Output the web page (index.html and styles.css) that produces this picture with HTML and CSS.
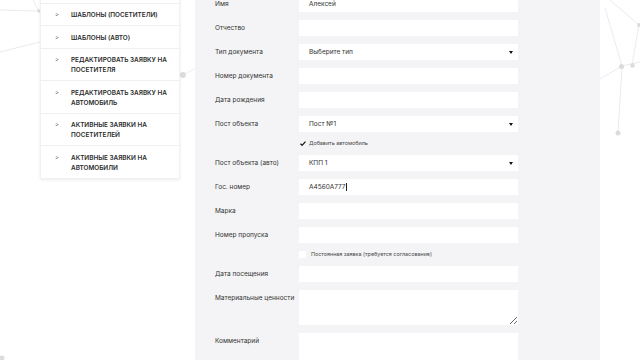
FILE: index.html
```html
<!DOCTYPE html>
<html lang="ru">
<head>
<meta charset="utf-8">
<title>Заявка</title>
<link rel="stylesheet" href="styles.css">
</head>
<body>
<svg class="bg-net" width="640" height="360" viewBox="0 0 640 360" aria-hidden="true">
  <g stroke="#e6e6e8" stroke-width="0.8" fill="none">
    <line x1="0" y1="10" x2="39" y2="11"/>
    <line x1="33" y1="0" x2="39" y2="11"/>
    <line x1="0" y1="52" x2="60" y2="37"/>
    <line x1="183" y1="75" x2="196" y2="68"/>
    <line x1="610" y1="0" x2="639" y2="25"/>
    <line x1="639" y1="25" x2="632" y2="65"/>
    <line x1="600" y1="79" x2="622" y2="66"/>
    <line x1="622" y1="66" x2="640" y2="62"/>
    <line x1="605" y1="8" x2="622" y2="66"/>
    <line x1="622" y1="66" x2="618" y2="133"/>
  </g>
  <g fill="#dcdcde">
    <circle cx="39" cy="11" r="1.8"/>
    <circle cx="183" cy="75" r="3"/>
    <circle cx="639" cy="25" r="2"/>
    <circle cx="632.5" cy="65.5" r="2.2"/>
    <circle cx="621.5" cy="66.5" r="2.5"/>
    <circle cx="618" cy="133" r="2.5"/>
    <circle cx="2" cy="358" r="2.5"/>
  </g>
</svg>
<div class="page">
  <aside class="side">
    <ul class="menu">
      <li class="menu-item"><span class="chev">&gt;</span><span class="menu-text">Шаблоны (посетители)</span></li>
      <li class="menu-item"><span class="chev">&gt;</span><span class="menu-text">Шаблоны (авто)</span></li>
      <li class="menu-item"><span class="chev">&gt;</span><span class="menu-text">Редактировать заявку на посетителя</span></li>
      <li class="menu-item"><span class="chev">&gt;</span><span class="menu-text">Редактировать заявку на автомобиль</span></li>
      <li class="menu-item"><span class="chev">&gt;</span><span class="menu-text">Активные заявки на посетителей</span></li>
      <li class="menu-item"><span class="chev">&gt;</span><span class="menu-text">Активные заявки на автомобили</span></li>
    </ul>
  </aside>
  <main class="panel">
    <form class="form">
      <div class="row"><label class="lbl">Имя</label><input class="field" type="text" value="Алексей"></div>
      <div class="row"><label class="lbl">Отчество</label><input class="field" type="text"></div>
      <div class="row"><label class="lbl">Тип документа</label><div class="select"><span>Выберите тип</span></div></div>
      <div class="row"><label class="lbl">Номер документа</label><input class="field" type="text"></div>
      <div class="row"><label class="lbl">Дата рождения</label><input class="field" type="text"></div>
      <div class="row"><label class="lbl">Пост объекта</label><div class="select"><span>Пост №1</span></div></div>
      <div class="check-row">
        <svg class="tick" width="6" height="5" viewBox="0 0 6 5"><path d="M0.5 2.8 L2.1 4.3 L5.5 0.6" stroke="#111" stroke-width="1.2" fill="none"/></svg>
        <span>Добавить автомобиль</span>
      </div>
      <div class="row"><label class="lbl">Пост объекта (авто)</label><div class="select"><span>КПП 1</span></div></div>
      <div class="row"><label class="lbl">Гос. номер</label><div class="field text-field">А4560А777<span class="caret"></span></div></div>
      <div class="row"><label class="lbl">Марка</label><input class="field" type="text"></div>
      <div class="row"><label class="lbl">Номер пропуска</label><input class="field" type="text"></div>
      <div class="check-row">
        <span class="box"></span>
        <span>Постоянная заявка (требуется согласование)</span>
      </div>
      <div class="row"><label class="lbl">Дата посещения</label><input class="field" type="text"></div>
      <div class="row"><label class="lbl">Материальные ценности</label><textarea class="field area"></textarea></div>
      <div class="row"><label class="lbl">Комментарий</label><textarea class="field area"></textarea></div>
    </form>
  </main>
</div>
</body>
</html>
```
FILE: styles.css
```css
* { box-sizing: border-box; }
html, body {
  margin: 0;
  width: 640px;
  height: 360px;
  overflow: hidden;
  background: #ffffff;
  font-family: Inter, "Noto Sans", sans-serif;
  color: #333;
}
body { position: relative; }
.bg-net {
  position: absolute;
  left: 0;
  top: 0;
  z-index: 0;
}
.page {
  position: relative;
  z-index: 1;
  display: flex;
  align-items: flex-start;
  margin-top: -20px;
  height: 380px;
  overflow: hidden;
}
.side {
  width: 195px;
  padding-left: 40px;
}
.menu {
  list-style: none;
  margin: 0;
  padding: 22.75px 0 0;
  width: 140px;
  background: #fff;
  box-shadow: 0 1px 3px rgba(0,0,0,0.08);
  border: 1px solid #f1f1f1;
  border-top: none;
}
.menu-item {
  display: flex;
  align-items: flex-start;
  padding: 6.5px 8px 5px 14px;
  line-height: 10px;
  border-top: 1px solid #f0f0f0;
  font-size: 6.4px;
  font-weight: 600;
  text-transform: uppercase;
  color: #2b2b2b;
}
.chev {
  width: 16px;
  flex: none;
  font-size: 6px;
  font-weight: 400;
  color: #666;
}
.menu-text { flex: 1; }
.panel {
  width: 405px;
  height: 380px;
  background: #f4f4f6;
  padding: 15.5px 0 0 20px;
}
.form {
  display: flex;
  flex-direction: column;
}
.row {
  display: flex;
  align-items: flex-start;
  margin-bottom: 8px;
}
.lbl {
  width: 84px;
  flex: none;
  font-size: 6.5px;
  line-height: 16px;
  color: #333;
}
.field {
  width: 219px;
  height: 16px;
  border: none;
  outline: none;
  background: #fff;
  margin: 0;
  padding: 0 10px;
  font-family: Inter, "Noto Sans", sans-serif;
  font-size: 6.5px;
  color: #333;
  border-radius: 0;
}
.text-field {
  display: flex;
  align-items: center;
}
.caret {
  width: 0.7px;
  height: 8px;
  background: #222;
  margin-left: 0.3px;
}
.area {
  height: 35px;
  resize: vertical;
  padding: 5px 10px;
}
.select {
  position: relative;
  width: 219px;
  height: 16px;
  background: #fff;
  padding: 0 10px;
  display: flex;
  align-items: center;
  font-size: 6.5px;
  color: #333;
}
.select::after {
  content: "";
  position: absolute;
  right: 5px;
  top: 7px;
  border-left: 2.5px solid transparent;
  border-right: 2.5px solid transparent;
  border-top: 3px solid #111;
}
.check-row {
  display: flex;
  align-items: center;
  height: 7px;
  margin-bottom: 8px;
  padding-left: 84px;
  font-size: 5.4px;
  color: #444;
}
.check-row .tick {
  margin-left: 1px;
  margin-right: 3px;
}
.box {
  width: 7px;
  height: 7px;
  background: #fff;
  margin-right: 5px;
}
```
